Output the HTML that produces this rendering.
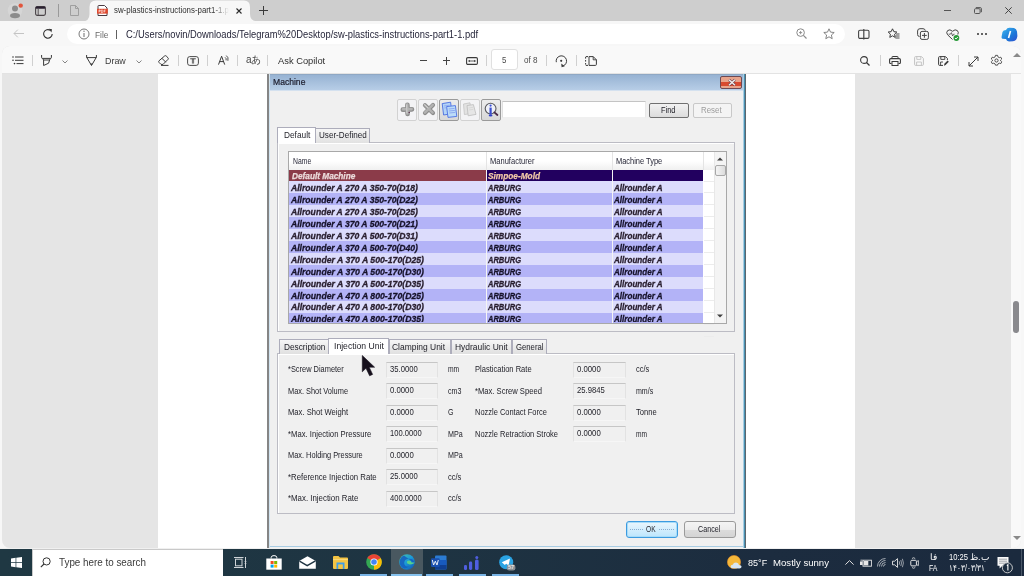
<!DOCTYPE html>
<html><head><meta charset="utf-8">
<style>
*{margin:0;padding:0;box-sizing:border-box}
html,body{width:1024px;height:576px;overflow:hidden;background:#f7f7f7;font-family:"Liberation Sans",sans-serif;position:relative}
.a{position:absolute}
svg{position:absolute;overflow:visible}
.t{position:absolute;white-space:nowrap;line-height:1}
</style></head><body>

<div class="a" style="left:0px;top:0px;width:1024px;height:21px;background:#cecece"></div>
<svg style="left:82px;top:0px" width="176" height="22" viewBox="0 0 176 22"><path d="M0 21.5 Q7.5 21.5 7.5 14 L7.5 7 Q7.5 0.5 14 0.5 L162 0.5 Q168 0.5 168 7 L168 14 Q168 21.5 176 21.5 Z" fill="#f7f7f7"></path></svg>
<svg style="left:7px;top:3px" width="16" height="16" viewBox="0 0 16 16"><circle cx="8" cy="7.5" r="7.3" fill="#d6d6d6"></circle><circle cx="8" cy="5.6" r="3" fill="#8c8c8c"></circle><ellipse cx="8" cy="12.6" rx="5" ry="2.6" fill="#8c8c8c"></ellipse><circle cx="13.7" cy="2.6" r="2.2" fill="#e2553c"></circle></svg>
<svg style="left:35px;top:6px" width="11" height="10" viewBox="0 0 11 10"><rect x="0.6" y="0.6" width="9.8" height="8.8" rx="1.6" fill="none" stroke="#4a4448" stroke-width="1.1"></rect><rect x="0.6" y="0.6" width="9.8" height="2.2" rx="1" fill="#2a2030"></rect><path d="M3.2 2.5V9" stroke="#5a5458" stroke-width="1"></path></svg>
<div class="a" style="left:58px;top:4px;width:1px;height:13px;background:#9a9a9a"></div>
<svg style="left:70px;top:5px" width="9" height="11" viewBox="0 0 9 11"><path d="M0.5 0.5H5.5L8.5 3.5V10.5H0.5Z M5.5 0.5V3.5H8.5" fill="none" stroke="#9a9a9a" stroke-width="0.9"></path></svg>
<svg style="left:97px;top:5px" width="11" height="11" viewBox="0 0 11 11"><path d="M1 10.5V1.2Q1 0.5 1.7 0.5H7.5L10 3V10.5Z" fill="#fff" stroke="#4a3a40" stroke-width="1"></path><rect x="0" y="3.8" width="10.8" height="4.8" fill="#e0472c"></rect><path d="M2 5V7.5M2 5H3.2V6.2H2M4.3 5V7.5H5.3Q5.9 7.5 5.9 6.8V5.8Q5.9 5 5.3 5Z M7.2 5V7.5M7.2 5H8.6M7.2 6.2H8.4" stroke="#fff" stroke-width="0.6" fill="none"></path></svg>
<div class="t" style="left: 114px; top: 5.2px; font-size: 9.5px; color: rgb(48, 48, 48); mask-image: linear-gradient(90deg, rgb(0, 0, 0) 85%, transparent 100%); transform-origin: 0px 0px; transform: scaleX(0.828176);">sw-plastics-instructions-part1-1.p</div>
<svg style="left:236px;top:8px" width="6" height="6" viewBox="0 0 6 6"><path d="M0.5 0.5L5.5 5.5M5.5 0.5L0.5 5.5" stroke="#2a2a2a" stroke-width="1.1"></path></svg>
<svg style="left:259px;top:6px" width="9" height="9" viewBox="0 0 9 9"><path d="M4.5 0V9M0 4.5H9" stroke="#3a3a3a" stroke-width="1"></path></svg>
<div class="a" style="left:944px;top:10px;width:7px;height:1px;background:#555"></div>
<svg style="left:974px;top:7px" width="8" height="7" viewBox="0 0 8 7"><rect x="0.5" y="1.7" width="5.6" height="4.8" rx="1" fill="none" stroke="#555" stroke-width="1"></rect><path d="M1.8 0.6H6.2Q7.4 0.6 7.4 1.8V5.2" fill="none" stroke="#555" stroke-width="1"></path></svg>
<svg style="left:1005px;top:7px" width="7" height="7" viewBox="0 0 7 7"><path d="M0.3 0.3L6.7 6.7M6.7 0.3L0.3 6.7" stroke="#444" stroke-width="1"></path></svg>
<div class="a" style="left:0px;top:21px;width:1024px;height:26px;background:#f7f7f7"></div>
<div class="a" style="left:67px;top:24px;width:778px;height:20px;background:#ffffff;border-radius:10px"></div>
<svg style="left:13px;top:29px" width="12" height="9" viewBox="0 0 12 9"><path d="M11 4.5H1M4.8 0.7L1 4.5L4.8 8.3" fill="none" stroke="#c4c4c4" stroke-width="1"></path></svg>
<svg style="left:42px;top:28px" width="12" height="12" viewBox="0 0 12 12"><path d="M10.2 6A4.3 4.3 0 1 1 8.4 2.4" fill="none" stroke="#333" stroke-width="1.1"></path><path d="M6.8 0.8L10 1.3L9.4 4.4Z" fill="#333"></path></svg>
<svg style="left:78px;top:28px" width="12" height="12" viewBox="0 0 12 12"><circle cx="6" cy="6" r="5" fill="none" stroke="#7a7a7a" stroke-width="1"></circle><path d="M6 5V9" stroke="#7a7a7a" stroke-width="1.1"></path><circle cx="6" cy="3.3" r="0.7" fill="#7a7a7a"></circle></svg>
<div class="t" style="left: 95px; top: 29.87px; font-size: 9.6px; color: rgb(106, 106, 106); font-weight: normal; font-style: normal; transform-origin: 0px 0px; transform: scaleX(0.872727);">File</div>
<div class="a" style="left:115.5px;top:29.5px;width:1.2px;height:9.5px;background:#606060"></div>
<div class="t" style="left: 125.7px; top: 29.7px; font-size: 10.4px; color: rgb(38, 38, 58); font-weight: normal; font-style: normal; transform-origin: 0px 0px; transform: scaleX(0.901661);">C:/Users/novin/Downloads/Telegram%20Desktop/sw-plastics-instructions-part1-1.pdf</div>
<svg style="left:796px;top:28px" width="11" height="11" viewBox="0 0 11 11"><circle cx="4.6" cy="4.6" r="3.8" fill="none" stroke="#8a8a8a" stroke-width="1"></circle><path d="M7.4 7.4L10.5 10.5" stroke="#8a8a8a" stroke-width="1.1"></path><path d="M4.6 3V6.2M3 4.6H6.2" stroke="#8a8a8a" stroke-width="0.9"></path></svg>
<svg style="left:822.5px;top:27.5px" width="12" height="12" viewBox="0 0 12 12"><path d="M6 0.8L7.5 4.1L11.2 4.5L8.4 7L9.2 10.7L6 8.8L2.8 10.7L3.6 7L0.8 4.5L4.5 4.1Z" fill="none" stroke="#777" stroke-width="0.9" stroke-linejoin="round"></path></svg>
<svg style="left:858px;top:29px" width="12" height="11" viewBox="0 0 12 11"><rect x="0.6" y="1.2" width="10.4" height="8.2" rx="1.4" fill="none" stroke="#444" stroke-width="1.1"></rect><path d="M5.8 0V10.6" stroke="#444" stroke-width="1.2"></path></svg>
<svg style="left:887px;top:28px" width="13" height="12" viewBox="0 0 13 12"><path d="M5.5 0.8L6.9 3.7L9.8 4L7.6 6.2L8.2 9.4L5.5 7.8L2.8 9.4L3.4 6.2L1.2 4L4.1 3.7Z" fill="none" stroke="#3a3a3a" stroke-width="1" stroke-linejoin="round"></path><path d="M9 6H12.5M8.6 8H12.5M8.4 10H12.5" stroke="#3a3a3a" stroke-width="0.9"></path></svg>
<svg style="left:917px;top:28px" width="12" height="12" viewBox="0 0 12 12"><path d="M2.5 8.5Q0.6 8.5 0.6 6.5V3Q0.6 0.7 3 0.7H6Q8 0.7 8.3 2.6" fill="none" stroke="#444" stroke-width="1"></path><rect x="3.4" y="3.4" width="8" height="8" rx="1.6" fill="#f7f7f7" stroke="#444" stroke-width="1"></rect><path d="M7.4 5V9.8M5 7.4H9.8" stroke="#444" stroke-width="1"></path></svg>
<svg style="left:946px;top:28.5px" width="14" height="12" viewBox="0 0 14 12"><path d="M6.5 10.5L1.6 5.8Q-0.2 3.6 1.6 1.6Q3.8 -0.3 6.5 2.3Q9.2 -0.3 11.4 1.6Q13 3.3 11.8 5.5" fill="none" stroke="#444" stroke-width="1"></path><path d="M2.6 5.2H4.4L5.4 3.6L6.6 7L7.6 5.2H8.6" fill="none" stroke="#444" stroke-width="0.8"></path><circle cx="10.4" cy="9" r="2.9" fill="#2a9a3a"></circle><path d="M9 9L10 10L11.8 8" fill="none" stroke="#fff" stroke-width="0.9"></path></svg>
<div class="a" style="left:977px;top:33px;width:1.6px;height:1.6px;background:#333;border-radius:1px"></div>
<div class="a" style="left:981px;top:33px;width:1.6px;height:1.6px;background:#333;border-radius:1px"></div>
<div class="a" style="left:985px;top:33px;width:1.6px;height:1.6px;background:#333;border-radius:1px"></div>
<svg style="left:1001px;top:27px" width="17" height="15" viewBox="0 0 17 15"><defs><linearGradient id="cp" x1="0" y1="0" x2="1" y2="1"><stop offset="0" stop-color="#3fb8f0"></stop><stop offset="0.6" stop-color="#1c78d8"></stop><stop offset="1" stop-color="#3050d0"></stop></linearGradient></defs><path d="M5 3Q6 0.5 9 0.8L13 1Q15.5 1.5 16 4.5L16.4 9Q16 13.8 12 14.2L8 14.4Q5.5 14.4 5 12L1.4 11.8Q0.2 11.4 0.6 9.6L1.5 5Q2.2 3 5 3Z" fill="url(#cp)"></path><path d="M9.5 4L7.5 11" stroke="#fff" stroke-width="1.6"></path></svg>
<div class="a" style="left:2px;top:46px;width:1019px;height:502px;background:#e5e5e5;border-radius:8px;overflow:hidden">
<div class="a" style="left:0px;top:0px;width:1019px;height:28px;background:#f9f9f9;border-bottom:1px solid #e3e3e3"></div>
<div class="a" style="left:1009px;top:28px;width:10px;height:474px;background:#f9f9f9"></div>
</div>
<div class="a" style="left:158px;top:74px;width:697px;height:474px;background:#ffffff"></div>
<div class="a" style="left:1013px;top:301px;width:6px;height:32px;background:#8a8a8e;border-radius:3px"></div>
<svg style="left:1012.5px;top:53px" width="8" height="4" viewBox="0 0 8 4"><path d="M0 4L4 0L8 4Z" fill="#8a8a8a"></path></svg>
<svg style="left:1012.5px;top:536px" width="8" height="4" viewBox="0 0 8 4"><path d="M0 0L4 4L8 0Z" fill="#8a8a8a"></path></svg>
<svg style="left:12px;top:56px" width="12" height="9" viewBox="0 0 12 9"><path d="M3 1H11.5M3 4.3H11.5M4.5 7.6H11.5" stroke="#3a3a3a" stroke-width="1"></path><circle cx="1" cy="1" r="0.8" fill="#3a3a3a"></circle><circle cx="1" cy="4.3" r="0.8" fill="#3a3a3a"></circle><circle cx="2.5" cy="7.6" r="0.8" fill="#3a3a3a"></circle></svg>
<div class="a" style="left:32px;top:55px;width:1px;height:11px;background:#d0d0d0"></div>
<svg style="left:40.5px;top:55px" width="11" height="11" viewBox="0 0 11 11"><path d="M0.6 0V2.5Q0.6 3.4 1.5 3.4H9.5Q10.4 3.4 10.4 2.5V0" fill="none" stroke="#3a3a3a" stroke-width="1"></path><path d="M1.5 3.4L2.6 5H8.6L9.5 3.4" fill="none" stroke="#3a3a3a" stroke-width="1"></path><path d="M2.6 5L2.6 10.5L7.6 8.2L8.6 5" fill="none" stroke="#3a3a3a" stroke-width="1"></path></svg>
<svg style="left:61.5px;top:59.5px" width="6" height="4" viewBox="0 0 6 4"><path d="M0.5 0.5L3 3L5.5 0.5" fill="none" stroke="#777" stroke-width="0.9"></path></svg>
<svg style="left:85.5px;top:55px" width="11" height="11" viewBox="0 0 11 11"><path d="M0.6 0V2.2L5.5 10.5L10.4 2.2V0" fill="none" stroke="#3a3a3a" stroke-width="1"></path><path d="M0.6 2.6H10.4" stroke="#3a3a3a" stroke-width="1"></path><path d="M4.3 8.6L5.5 10.6L6.7 8.6Z" fill="#3a3a3a"></path></svg>
<div class="t" style="left: 104.9px; top: 55.9px; font-size: 9.8px; color: rgb(58, 58, 58); font-weight: normal; font-style: normal; transform-origin: 0px 0px; transform: scaleX(0.90929);">Draw</div>
<svg style="left:136px;top:59.5px" width="6" height="4" viewBox="0 0 6 4"><path d="M0.5 0.5L3 3L5.5 0.5" fill="none" stroke="#777" stroke-width="0.9"></path></svg>
<svg style="left:157.5px;top:55px" width="11" height="11" viewBox="0 0 11 11"><path d="M6.6 1Q7.4 0.3 8.2 1L10 2.8Q10.7 3.6 10 4.4L5 9.4H3L1 7.4Q0.3 6.6 1 5.8Z" fill="none" stroke="#3a3a3a" stroke-width="1"></path><path d="M3.8 3.2L7.8 7.2M3 10.4H10.5" stroke="#3a3a3a" stroke-width="1"></path></svg>
<div class="a" style="left:178px;top:55px;width:1px;height:11px;background:#d0d0d0"></div>
<svg style="left:187px;top:55.5px" width="12" height="10" viewBox="0 0 12 10"><rect x="0.6" y="0.6" width="10.8" height="8.8" rx="2.2" fill="none" stroke="#4a4a4a" stroke-width="1"></rect><path d="M3.2 2.8H8.8" stroke="#4a4a4a" stroke-width="1"></path><path d="M5.4 2.8V7.6M6.6 2.8V7.6" stroke="#4a4a4a" stroke-width="0.8"></path></svg>
<div class="a" style="left:207px;top:55px;width:1px;height:11px;background:#d0d0d0"></div>
<svg style="left:217.5px;top:55px" width="12" height="10" viewBox="0 0 12 10"><path d="M0.5 9.6L3.6 1.2L6.7 9.6M1.7 6.6H5.5" fill="none" stroke="#3a3a3a" stroke-width="1"></path><path d="M7.4 2.6Q8.6 3.4 8.2 5M8.6 0.8Q10.8 2.2 10 5.4" fill="none" stroke="#3a3a3a" stroke-width="0.9" stroke-linecap="round"></path></svg>
<div class="a" style="left:237px;top:55px;width:1px;height:11px;background:#d0d0d0"></div>
<div class="t" style="left:245.5px;top:54.5px;font-size:10px;color:#444;letter-spacing:-1px;transform:scale(1.001)">aあ</div>
<div class="a" style="left:267px;top:55px;width:1px;height:11px;background:#d0d0d0"></div>
<div class="t" style="left: 278.4px; top: 55.96px; font-size: 9.5px; color: rgb(46, 46, 46); font-weight: normal; font-style: normal; transform-origin: 0px 0px; transform: scaleX(0.982055);">Ask Copilot</div>
<div class="a" style="left:419.5px;top:60px;width:7px;height:1px;background:#444"></div>
<div class="a" style="left:443px;top:60px;width:7px;height:1px;background:#444"></div>
<div class="a" style="left:446px;top:56.5px;width:1px;height:8px;background:#444"></div>
<svg style="left:465.5px;top:57px" width="12" height="8" viewBox="0 0 12 8"><rect x="0.6" y="0.6" width="10.8" height="6.8" rx="1.2" fill="none" stroke="#3a3a3a" stroke-width="1.1"></rect><path d="M2.5 4H9.5" stroke="#3a3a3a" stroke-width="0.8"></path><path d="M2.2 4L3.8 2.7V5.3Z M9.8 4L8.2 2.7V5.3Z" fill="#3a3a3a"></path></svg>
<div class="a" style="left:486px;top:55px;width:1px;height:11px;background:#d0d0d0"></div>
<div class="a" style="left:490.5px;top:49.3px;width:27px;height:21.2px;background:#ffffff;border:1px solid #e0e0e0;border-radius:3px"></div>
<div class="t" style="left: 501.8px; top: 56.15px; font-size: 8.8px; color: rgb(74, 74, 74); font-weight: normal; font-style: normal; transform-origin: 0px 0px; transform: scaleX(0.896815);">5</div>
<div class="t" style="left: 524px; top: 56.15px; font-size: 8.8px; color: rgb(74, 74, 74); font-weight: normal; font-style: normal; transform-origin: 0px 0px; transform: scaleX(0.919149);">of 8</div>
<div class="a" style="left:545.5px;top:55px;width:1px;height:11px;background:#d0d0d0"></div>
<svg style="left:554.5px;top:54.5px" width="13" height="13" viewBox="0 0 13 13"><path d="M1.3 7.2A5.2 5.2 0 1 1 8.2 10.9" fill="none" stroke="#3a3a3a" stroke-width="1"></path><path d="M6.2 8.6L6.6 12.2L9.8 11.2Z" fill="#3a3a3a"></path><circle cx="6.2" cy="5.8" r="1.1" fill="#3a3a3a"></circle></svg>
<div class="a" style="left:575.5px;top:55px;width:1px;height:11px;background:#d0d0d0"></div>
<svg style="left:584.5px;top:55.5px" width="12" height="10" viewBox="0 0 12 10"><path d="M4 0.6H8.2L11.4 3.8V8.4Q11.4 9.4 10.4 9.4H4" fill="none" stroke="#3a3a3a" stroke-width="1"></path><path d="M4 0.6V9.4" stroke="#3a3a3a" stroke-width="1"></path><path d="M8.2 0.6V3.8H11.4" fill="none" stroke="#3a3a3a" stroke-width="0.9"></path><path d="M0.6 1V9" stroke="#3a3a3a" stroke-width="1" stroke-dasharray="1.6 1.4"></path><path d="M0.8 0.6H3M0.8 9.4H3" stroke="#3a3a3a" stroke-width="1"></path></svg>
<svg style="left:860px;top:56px" width="10" height="10" viewBox="0 0 10 10"><circle cx="4" cy="4" r="3.4" fill="none" stroke="#3a3a3a" stroke-width="1.1"></circle><path d="M6.5 6.5L9.5 9.5" stroke="#3a3a3a" stroke-width="1.2"></path></svg>
<div class="a" style="left:879.5px;top:55px;width:1px;height:11px;background:#d0d0d0"></div>
<svg style="left:889px;top:56px" width="12" height="10" viewBox="0 0 12 10"><path d="M3 2.5V1Q3 0.5 3.5 0.5H8.5Q9 0.5 9 1V2.5" fill="none" stroke="#3a3a3a" stroke-width="1"></path><path d="M2.5 7.5H1.5Q0.6 7.5 0.6 6.5V3.8Q0.6 2.6 1.8 2.6H10.2Q11.4 2.6 11.4 3.8V6.5Q11.4 7.5 10.5 7.5H9.5" fill="none" stroke="#3a3a3a" stroke-width="1.1"></path><rect x="3" y="5.5" width="6" height="4" fill="none" stroke="#3a3a3a" stroke-width="1"></rect></svg>
<svg style="left:913.5px;top:56px" width="10" height="10" viewBox="0 0 10 10"><path d="M1.6 0.6H7.5L9.4 2.5V8.4Q9.4 9.4 8.4 9.4H1.6Q0.6 9.4 0.6 8.4V1.6Q0.6 0.6 1.6 0.6Z" fill="none" stroke="#c2c2c2" stroke-width="1"></path><path d="M2.8 0.8V3.4H6.8V0.8M2.6 9.2V6H7.4V9.2" fill="none" stroke="#c2c2c2" stroke-width="0.9"></path></svg>
<svg style="left:938px;top:56px" width="11" height="10" viewBox="0 0 11 10"><path d="M5 9.4H1.6Q0.6 9.4 0.6 8.4V1.6Q0.6 0.6 1.6 0.6H7.5L9.4 2.5V4" fill="none" stroke="#3a3a3a" stroke-width="1"></path><path d="M2.8 0.8V3.4H6.8V0.8M2.6 9.2V6H5" fill="none" stroke="#3a3a3a" stroke-width="0.9"></path><path d="M6 9.8L6.4 7.8L9.6 4.6L10.8 5.8L7.6 9Z" fill="#3a3a3a"></path></svg>
<div class="a" style="left:957.5px;top:55px;width:1px;height:11px;background:#d0d0d0"></div>
<svg style="left:967.5px;top:55.5px" width="11" height="11" viewBox="0 0 11 11"><path d="M1 10L10 1M6 1H10V5M1 6V10H5" fill="none" stroke="#3a3a3a" stroke-width="1"></path></svg>
<svg style="left:991px;top:55px" width="11" height="11" viewBox="0 0 11 11"><path d="M4.4 0.6H6.6L7 2.2L8.4 3L10 2.5L11 4.4L9.8 5.5V6.3L11 7.4L10 9.3L8.4 8.8L7 9.6L6.6 10.9H4.4L4 9.6L2.6 8.8L1 9.3L0 7.4L1.2 6.3V5.5L0 4.4L1 2.5L2.6 3L4 2.2Z" transform="translate(0.3,-0.2) scale(0.95)" fill="none" stroke="#3a3a3a" stroke-width="0.9" stroke-linejoin="round"></path><circle cx="5.5" cy="5.5" r="1.6" fill="none" stroke="#3a3a3a" stroke-width="0.9"></circle></svg>
<div class="a" style="left:267px;top:74px;width:479px;height:474px;background:#f0f0f0;border-left:2px solid #858585;border-right:1px solid #5c666e;box-shadow:inset 1px 0 0 #d2e4f0, inset -1px 0 0 #4890b0, inset -2px 0 0 #a6cce2"></div>
<div class="a" style="left:270px;top:74px;width:473px;height:1px;background:#8fa8c4"></div>
<div class="a" style="left:270px;top:75px;width:473px;height:16px;background:linear-gradient(#97b3d3,#b9cfe8)"></div>
<div class="a" style="left:270px;top:90px;width:473px;height:1px;background:#d4e1ef"></div>
<div class="a" style="left:270px;top:546px;width:473px;height:1px;background:#a9cde4"></div>
<div class="a" style="left:270px;top:547px;width:473px;height:1px;background:#f0f0f0"></div>
<div class="t" style="left: 272.5px; top: 78.41px; font-size: 9.2px; color: rgb(26, 26, 42); font-weight: normal; font-style: normal; transform-origin: 0px 0px; -webkit-text-stroke: 0.2px rgb(26, 26, 42); transform: scaleX(0.932794);">Machine</div>
<div class="a" style="left:720px;top:76px;width:22px;height:12.5px;background:linear-gradient(#e8a48c 0%,#e8a48c 42%,#d84a30 45%,#d84a30 78%,#e8a48c 80%);border:1px solid #6e4a52;border-radius:2px"></div>
<svg style="left:727.5px;top:79px" width="8" height="7" viewBox="0 0 8 7"><path d="M1 0.8L7 6.2M7 0.8L1 6.2" stroke="#6a4048" stroke-width="2.6"></path><path d="M1 0.8L7 6.2M7 0.8L1 6.2" stroke="#f2eeee" stroke-width="1.5"></path></svg>
<div class="a" style="left:397px;top:99px;width:20px;height:22px;background:#f3f3f5;border:1px solid #d2d2d2;border-radius:2px"></div>
<div class="a" style="left:418px;top:99px;width:20px;height:22px;background:#f3f3f5;border:1px solid #d2d2d2;border-radius:2px"></div>
<div class="a" style="left:439px;top:99px;width:20px;height:22px;background:linear-gradient(#ececec,#d8d8d8);border:1px solid #9a9a9a;border-radius:2px"></div>
<div class="a" style="left:460px;top:99px;width:20px;height:22px;background:#f3f3f5;border:1px solid #d2d2d2;border-radius:2px"></div>
<div class="a" style="left:481px;top:99px;width:20px;height:22px;background:linear-gradient(#ececec,#d8d8d8);border:1px solid #9a9a9a;border-radius:2px"></div>
<svg style="left:400px;top:101.5px" width="15" height="15" viewBox="0 0 15 15"><path d="M7.4 2.8L7.6 12M2.8 7.6L12 7.4" stroke="#8e8e8e" stroke-width="4.6" stroke-linecap="round"></path><path d="M7.2 2.6L7.3 11.4M3 7.2L11.6 7.1" stroke="#b4b4b4" stroke-width="2.6" stroke-linecap="round"></path><path d="M6.6 3L6.8 10.6" stroke="#d0d0d0" stroke-width="0.9" stroke-linecap="round"></path><circle cx="9.2" cy="10.4" r="0.7" fill="#5a2a4a"></circle></svg>
<svg style="left:421.5px;top:102px" width="14" height="14" viewBox="0 0 14 14"><path d="M3 3.2L11 11M11 3L3 11" stroke="#8c8c8c" stroke-width="4.2" stroke-linecap="round"></path><path d="M2.8 3L10.6 10.6M10.8 2.8L2.9 10.6" stroke="#b2b2b2" stroke-width="2.4" stroke-linecap="round"></path><path d="M2.6 2.6L6 6" stroke="#d4d4d4" stroke-width="0.9" stroke-linecap="round"></path></svg>
<svg style="left:440.5px;top:100.5px" width="17" height="17" viewBox="0 0 17 17"><path d="M1.2 2.6L9.6 1.2L11 12.6L2.6 14Z" fill="#b4d4f6" stroke="#4a6ee0" stroke-width="0.9"></path><path d="M5.6 5.6L14.4 4.6L15.8 15.4L7 16.4Z" fill="#bcdcf8" stroke="#4c70e4" stroke-width="0.9"></path><path d="M7.6 8L13.6 7.4M7.9 10L13.9 9.4M8.2 12L14.2 11.4" stroke="#7a94ec" stroke-width="0.7"></path><path d="M3 5L8.6 4.2M3.3 7L6 6.6" stroke="#7a94ec" stroke-width="0.6"></path></svg>
<svg style="left:462px;top:101px" width="15" height="16" viewBox="0 0 15 16"><path d="M1.5 3L8 1.8L9 12.4L2.4 13.6Z" fill="#e2e2e2" stroke="#c4c4c4" stroke-width="0.8"></path><path d="M5 4.6L11.4 3.6L14 13.4L6.2 14.8Z" fill="#e6e6e6" stroke="#bcbcbc" stroke-width="0.8"></path><path d="M6.6 7L11 6.3M6.9 9L11.4 8.3" stroke="#cfcfcf" stroke-width="0.6"></path></svg>
<svg style="left:483.5px;top:101.5px" width="15" height="16" viewBox="0 0 15 16"><circle cx="6.6" cy="6.6" r="5.4" fill="#eef0f8" stroke="#5a5a5e" stroke-width="1.1"></circle><path d="M10.4 10.4L13.4 13" stroke="#4a2a4a" stroke-width="1.8" stroke-linecap="round"></path><circle cx="6.6" cy="3.6" r="1.1" fill="#3a50d8"></circle><path d="M6.6 5.6V12.6" stroke="#3a4ed0" stroke-width="2.2"></path><ellipse cx="6.6" cy="13.6" rx="1.9" ry="1" fill="#3040c8"></ellipse></svg>
<div class="a" style="left:502px;top:101px;width:144px;height:17px;background:#ffffff;border-top:1px solid #c4c4c4;border-left:1px solid #e0e0e0;border-right:1px solid #e8e8e8;border-bottom:1px solid #f0f0f0"></div>
<div class="a" style="left:649px;top:103px;width:40px;height:15px;background:linear-gradient(#f2f2f2,#dcdcdc);border:1px solid #707070;border-radius:2px"></div>
<div class="t" style="left: 660.6px; top: 105.98px; font-size: 9px; color: rgb(26, 26, 34); font-weight: normal; font-style: normal; transform-origin: 0px 0px; transform: scaleX(0.822123);">Find</div>
<div class="a" style="left:693px;top:103px;width:39px;height:15px;background:#f4f4f4;border:1px solid #c8c8c8;border-radius:2px"></div>
<div class="t" style="left: 701.2px; top: 105.98px; font-size: 9px; color: rgb(156, 156, 156); font-weight: normal; font-style: normal; transform-origin: 0px 0px; transform: scaleX(0.876013);">Reset</div>
<div class="a" style="left:277px;top:142px;width:458px;height:190px;border:1px solid #bcbcc4;background:#f0f0f0;box-shadow:inset 1px 1px 0 #ffffff"></div>
<div class="a" style="left:315px;top:128px;width:55px;height:15px;background:linear-gradient(#f6f6f6,#e2e2e2);border:1px solid #adadbb;border-bottom:none"></div>
<div class="a" style="left:277px;top:127px;width:39px;height:16px;background:#ffffff;border:1px solid #adadbb;border-bottom:none"></div>
<div class="t" style="left: 283.5px; top: 130.63px; font-size: 9.3px; color: rgb(30, 30, 38); font-weight: normal; font-style: normal; transform-origin: 0px 0px; transform: scaleX(0.892471);">Default</div>
<div class="t" style="left: 318.6px; top: 131.43px; font-size: 9.3px; color: rgb(30, 30, 38); font-weight: normal; font-style: normal; transform-origin: 0px 0px; transform: scaleX(0.870736);">User-Defined</div>
<div class="a" style="left:288px;top:151px;width:439px;height:173px;background:#ffffff;border:1px solid #a8a8a8"></div>
<div class="a" style="left:289px;top:152px;width:437px;height:18px;background:linear-gradient(#ffffff 0%,#ffffff 50%,#f0f0f0 100%)"></div>
<div class="a" style="left:486px;top:152px;width:1px;height:18px;background:#e4e4e4"></div>
<div class="a" style="left:612px;top:152px;width:1px;height:18px;background:#e4e4e4"></div>
<div class="a" style="left:703px;top:152px;width:1px;height:18px;background:#e4e4e4"></div>
<div class="t" style="left: 293.4px; top: 157.38px; font-size: 9px; color: rgb(38, 38, 54); font-weight: normal; font-style: normal; transform-origin: 0px 0px; transform: scaleX(0.75784);">Name</div>
<div class="t" style="left: 489.9px; top: 157.38px; font-size: 9px; color: rgb(38, 38, 54); font-weight: normal; font-style: normal; transform-origin: 0px 0px; transform: scaleX(0.837242);">Manufacturer</div>
<div class="t" style="left: 616px; top: 157.38px; font-size: 9px; color: rgb(38, 38, 54); font-weight: normal; font-style: normal; transform-origin: 0px 0px; transform: scaleX(0.826846);">Machine Type</div>
<div class="a" style="left:714px;top:152px;width:12px;height:171px;background:#f4f4f4;border-left:1px solid #e8e8e8"></div>
<svg style="left:717px;top:157px" width="6" height="4" viewBox="0 0 6 4"><path d="M0 3.5L3 0.5L6 3.5z" fill="#404040"></path></svg>
<svg style="left:717px;top:314px" width="6" height="4" viewBox="0 0 6 4"><path d="M0 0.5L3 3.5L6 0.5z" fill="#404040"></path></svg>
<div class="a" style="left:715px;top:165px;width:11px;height:11px;background:linear-gradient(90deg,#f4f4f4,#dcdcdc);border:1px solid #a8a8a8;border-radius:2px"></div>
<div class="a" style="left:289px;top:170px;width:425px;height:153px;overflow:hidden">
<div class="a" style="left:0;top:0;width:197px;height:11px;background:#8b3b49"></div>
<div class="a" style="left:198px;top:0;width:216px;height:11px;background:#22005f"></div>
<div class="a" style="left:0;top:11.30px;width:414px;height:11.94px;background:#dcdcfc"></div>
<div class="a" style="left:0;top:23.24px;width:414px;height:11.94px;background:#b3b3f7"></div>
<div class="a" style="left:0;top:35.18px;width:414px;height:11.94px;background:#dcdcfc"></div>
<div class="a" style="left:0;top:47.12px;width:414px;height:11.94px;background:#b3b3f7"></div>
<div class="a" style="left:0;top:59.06px;width:414px;height:11.94px;background:#dcdcfc"></div>
<div class="a" style="left:0;top:71.00px;width:414px;height:11.94px;background:#b3b3f7"></div>
<div class="a" style="left:0;top:82.94px;width:414px;height:11.94px;background:#dcdcfc"></div>
<div class="a" style="left:0;top:94.88px;width:414px;height:11.94px;background:#b3b3f7"></div>
<div class="a" style="left:0;top:106.82px;width:414px;height:11.94px;background:#dcdcfc"></div>
<div class="a" style="left:0;top:118.76px;width:414px;height:11.94px;background:#b3b3f7"></div>
<div class="a" style="left:0;top:130.70px;width:414px;height:11.94px;background:#dcdcfc"></div>
<div class="a" style="left:0;top:142.64px;width:414px;height:11.94px;background:#b3b3f7"></div>
</div>
<div class="a" style="left:704px;top:181px;width:10px;height:1px;background:#ececec"></div>
<div class="a" style="left:704px;top:192px;width:10px;height:1px;background:#ececec"></div>
<div class="a" style="left:704px;top:204px;width:10px;height:1px;background:#ececec"></div>
<div class="a" style="left:704px;top:216px;width:10px;height:1px;background:#ececec"></div>
<div class="a" style="left:704px;top:228px;width:10px;height:1px;background:#ececec"></div>
<div class="a" style="left:704px;top:240px;width:10px;height:1px;background:#ececec"></div>
<div class="a" style="left:704px;top:252px;width:10px;height:1px;background:#ececec"></div>
<div class="a" style="left:704px;top:264px;width:10px;height:1px;background:#ececec"></div>
<div class="a" style="left:704px;top:276px;width:10px;height:1px;background:#ececec"></div>
<div class="a" style="left:704px;top:288px;width:10px;height:1px;background:#ececec"></div>
<div class="a" style="left:704px;top:300px;width:10px;height:1px;background:#ececec"></div>
<div class="a" style="left:704px;top:312px;width:10px;height:1px;background:#ececec"></div>
<div class="a" style="left:704px;top:324px;width:10px;height:1px;background:#ececec"></div>
<div class="a" style="left:704px;top:336px;width:10px;height:1px;background:#ececec"></div>
<div class="a" style="left:486px;top:170px;width:1px;height:153px;background:#f4f4f4"></div>
<div class="a" style="left:612px;top:170px;width:1px;height:153px;background:#f4f4f4"></div>
<div class="a" style="left:0;top:0;width:1024px;height:322px;overflow:hidden">
<div class="t" style="left: 291.7px; top: 172.38px; font-size: 9px; color: rgb(236, 220, 220); font-weight: bold; font-style: italic; transform-origin: 0px 0px; -webkit-text-stroke: 0.25px rgb(236, 220, 220); transform: scaleX(0.917184);">Default Machine</div>
<div class="t" style="left: 487.9px; top: 172.38px; font-size: 9px; color: rgb(242, 201, 168); font-weight: bold; font-style: italic; transform-origin: 0px 0px; -webkit-text-stroke: 0.25px rgb(242, 201, 168); transform: scaleX(0.920354);">Simpoe-Mold</div>
<div class="t" style="left: 291px; top: 184.08px; font-size: 9px; color: rgb(42, 32, 48); font-weight: bold; font-style: italic; transform-origin: 0px 0px; -webkit-text-stroke: 0.3px rgb(42, 32, 48); transform: scaleX(0.956911);">Allrounder A 270 A 350-70(D18)</div>
<div class="t" style="left: 487.6px; top: 184.08px; font-size: 9px; color: rgb(42, 32, 48); font-weight: bold; font-style: italic; transform-origin: 0px 0px; -webkit-text-stroke: 0.3px rgb(42, 32, 48); transform: scaleX(0.835443);">ARBURG</div>
<div class="t" style="left: 614px; top: 184.08px; font-size: 9px; color: rgb(42, 32, 48); font-weight: bold; font-style: italic; transform-origin: 0px 0px; -webkit-text-stroke: 0.3px rgb(42, 32, 48); transform: scaleX(0.89899);">Allrounder A</div>
<div class="t" style="left: 291px; top: 196.02px; font-size: 9px; color: rgb(22, 18, 42); font-weight: bold; font-style: italic; transform-origin: 0px 0px; -webkit-text-stroke: 0.3px rgb(22, 18, 42); transform: scaleX(0.956911);">Allrounder A 270 A 350-70(D22)</div>
<div class="t" style="left: 487.6px; top: 196.02px; font-size: 9px; color: rgb(22, 18, 42); font-weight: bold; font-style: italic; transform-origin: 0px 0px; -webkit-text-stroke: 0.3px rgb(22, 18, 42); transform: scaleX(0.835443);">ARBURG</div>
<div class="t" style="left: 614px; top: 196.02px; font-size: 9px; color: rgb(22, 18, 42); font-weight: bold; font-style: italic; transform-origin: 0px 0px; -webkit-text-stroke: 0.3px rgb(22, 18, 42); transform: scaleX(0.89899);">Allrounder A</div>
<div class="t" style="left: 291px; top: 207.96px; font-size: 9px; color: rgb(42, 32, 48); font-weight: bold; font-style: italic; transform-origin: 0px 0px; -webkit-text-stroke: 0.3px rgb(42, 32, 48); transform: scaleX(0.956911);">Allrounder A 270 A 350-70(D25)</div>
<div class="t" style="left: 487.6px; top: 207.96px; font-size: 9px; color: rgb(42, 32, 48); font-weight: bold; font-style: italic; transform-origin: 0px 0px; -webkit-text-stroke: 0.3px rgb(42, 32, 48); transform: scaleX(0.835443);">ARBURG</div>
<div class="t" style="left: 614px; top: 207.96px; font-size: 9px; color: rgb(42, 32, 48); font-weight: bold; font-style: italic; transform-origin: 0px 0px; -webkit-text-stroke: 0.3px rgb(42, 32, 48); transform: scaleX(0.89899);">Allrounder A</div>
<div class="t" style="left: 291px; top: 219.9px; font-size: 9px; color: rgb(22, 18, 42); font-weight: bold; font-style: italic; transform-origin: 0px 0px; -webkit-text-stroke: 0.3px rgb(22, 18, 42); transform: scaleX(0.956911);">Allrounder A 370 A 500-70(D21)</div>
<div class="t" style="left: 487.6px; top: 219.9px; font-size: 9px; color: rgb(22, 18, 42); font-weight: bold; font-style: italic; transform-origin: 0px 0px; -webkit-text-stroke: 0.3px rgb(22, 18, 42); transform: scaleX(0.835443);">ARBURG</div>
<div class="t" style="left: 614px; top: 219.9px; font-size: 9px; color: rgb(22, 18, 42); font-weight: bold; font-style: italic; transform-origin: 0px 0px; -webkit-text-stroke: 0.3px rgb(22, 18, 42); transform: scaleX(0.89899);">Allrounder A</div>
<div class="t" style="left: 291px; top: 231.84px; font-size: 9px; color: rgb(42, 32, 48); font-weight: bold; font-style: italic; transform-origin: 0px 0px; -webkit-text-stroke: 0.3px rgb(42, 32, 48); transform: scaleX(0.956911);">Allrounder A 370 A 500-70(D31)</div>
<div class="t" style="left: 487.6px; top: 231.84px; font-size: 9px; color: rgb(42, 32, 48); font-weight: bold; font-style: italic; transform-origin: 0px 0px; -webkit-text-stroke: 0.3px rgb(42, 32, 48); transform: scaleX(0.835443);">ARBURG</div>
<div class="t" style="left: 614px; top: 231.84px; font-size: 9px; color: rgb(42, 32, 48); font-weight: bold; font-style: italic; transform-origin: 0px 0px; -webkit-text-stroke: 0.3px rgb(42, 32, 48); transform: scaleX(0.89899);">Allrounder A</div>
<div class="t" style="left: 291px; top: 243.78px; font-size: 9px; color: rgb(22, 18, 42); font-weight: bold; font-style: italic; transform-origin: 0px 0px; -webkit-text-stroke: 0.3px rgb(22, 18, 42); transform: scaleX(0.956911);">Allrounder A 370 A 500-70(D40)</div>
<div class="t" style="left: 487.6px; top: 243.78px; font-size: 9px; color: rgb(22, 18, 42); font-weight: bold; font-style: italic; transform-origin: 0px 0px; -webkit-text-stroke: 0.3px rgb(22, 18, 42); transform: scaleX(0.835443);">ARBURG</div>
<div class="t" style="left: 614px; top: 243.78px; font-size: 9px; color: rgb(22, 18, 42); font-weight: bold; font-style: italic; transform-origin: 0px 0px; -webkit-text-stroke: 0.3px rgb(22, 18, 42); transform: scaleX(0.89899);">Allrounder A</div>
<div class="t" style="left: 291px; top: 255.72px; font-size: 9px; color: rgb(42, 32, 48); font-weight: bold; font-style: italic; transform-origin: 0px 0px; -webkit-text-stroke: 0.3px rgb(42, 32, 48); transform: scaleX(0.965736);">Allrounder A 370 A 500-170(D25)</div>
<div class="t" style="left: 487.6px; top: 255.72px; font-size: 9px; color: rgb(42, 32, 48); font-weight: bold; font-style: italic; transform-origin: 0px 0px; -webkit-text-stroke: 0.3px rgb(42, 32, 48); transform: scaleX(0.835443);">ARBURG</div>
<div class="t" style="left: 614px; top: 255.72px; font-size: 9px; color: rgb(42, 32, 48); font-weight: bold; font-style: italic; transform-origin: 0px 0px; -webkit-text-stroke: 0.3px rgb(42, 32, 48); transform: scaleX(0.89899);">Allrounder A</div>
<div class="t" style="left: 291px; top: 267.66px; font-size: 9px; color: rgb(22, 18, 42); font-weight: bold; font-style: italic; transform-origin: 0px 0px; -webkit-text-stroke: 0.3px rgb(22, 18, 42); transform: scaleX(0.965736);">Allrounder A 370 A 500-170(D30)</div>
<div class="t" style="left: 487.6px; top: 267.66px; font-size: 9px; color: rgb(22, 18, 42); font-weight: bold; font-style: italic; transform-origin: 0px 0px; -webkit-text-stroke: 0.3px rgb(22, 18, 42); transform: scaleX(0.835443);">ARBURG</div>
<div class="t" style="left: 614px; top: 267.66px; font-size: 9px; color: rgb(22, 18, 42); font-weight: bold; font-style: italic; transform-origin: 0px 0px; -webkit-text-stroke: 0.3px rgb(22, 18, 42); transform: scaleX(0.89899);">Allrounder A</div>
<div class="t" style="left: 291px; top: 279.6px; font-size: 9px; color: rgb(42, 32, 48); font-weight: bold; font-style: italic; transform-origin: 0px 0px; -webkit-text-stroke: 0.3px rgb(42, 32, 48); transform: scaleX(0.965736);">Allrounder A 370 A 500-170(D35)</div>
<div class="t" style="left: 487.6px; top: 279.6px; font-size: 9px; color: rgb(42, 32, 48); font-weight: bold; font-style: italic; transform-origin: 0px 0px; -webkit-text-stroke: 0.3px rgb(42, 32, 48); transform: scaleX(0.835443);">ARBURG</div>
<div class="t" style="left: 614px; top: 279.6px; font-size: 9px; color: rgb(42, 32, 48); font-weight: bold; font-style: italic; transform-origin: 0px 0px; -webkit-text-stroke: 0.3px rgb(42, 32, 48); transform: scaleX(0.89899);">Allrounder A</div>
<div class="t" style="left: 291px; top: 291.54px; font-size: 9px; color: rgb(22, 18, 42); font-weight: bold; font-style: italic; transform-origin: 0px 0px; -webkit-text-stroke: 0.3px rgb(22, 18, 42); transform: scaleX(0.965736);">Allrounder A 470 A 800-170(D25)</div>
<div class="t" style="left: 487.6px; top: 291.54px; font-size: 9px; color: rgb(22, 18, 42); font-weight: bold; font-style: italic; transform-origin: 0px 0px; -webkit-text-stroke: 0.3px rgb(22, 18, 42); transform: scaleX(0.835443);">ARBURG</div>
<div class="t" style="left: 614px; top: 291.54px; font-size: 9px; color: rgb(22, 18, 42); font-weight: bold; font-style: italic; transform-origin: 0px 0px; -webkit-text-stroke: 0.3px rgb(22, 18, 42); transform: scaleX(0.89899);">Allrounder A</div>
<div class="t" style="left: 291px; top: 303.48px; font-size: 9px; color: rgb(42, 32, 48); font-weight: bold; font-style: italic; transform-origin: 0px 0px; -webkit-text-stroke: 0.3px rgb(42, 32, 48); transform: scaleX(0.965736);">Allrounder A 470 A 800-170(D30)</div>
<div class="t" style="left: 487.6px; top: 303.48px; font-size: 9px; color: rgb(42, 32, 48); font-weight: bold; font-style: italic; transform-origin: 0px 0px; -webkit-text-stroke: 0.3px rgb(42, 32, 48); transform: scaleX(0.835443);">ARBURG</div>
<div class="t" style="left: 614px; top: 303.48px; font-size: 9px; color: rgb(42, 32, 48); font-weight: bold; font-style: italic; transform-origin: 0px 0px; -webkit-text-stroke: 0.3px rgb(42, 32, 48); transform: scaleX(0.89899);">Allrounder A</div>
<div class="t" style="left: 291px; top: 315.42px; font-size: 9px; color: rgb(22, 18, 42); font-weight: bold; font-style: italic; transform-origin: 0px 0px; -webkit-text-stroke: 0.3px rgb(22, 18, 42); transform: scaleX(0.965736);">Allrounder A 470 A 800-170(D35)</div>
<div class="t" style="left: 487.6px; top: 315.42px; font-size: 9px; color: rgb(22, 18, 42); font-weight: bold; font-style: italic; transform-origin: 0px 0px; -webkit-text-stroke: 0.3px rgb(22, 18, 42); transform: scaleX(0.835443);">ARBURG</div>
<div class="t" style="left: 614px; top: 315.42px; font-size: 9px; color: rgb(22, 18, 42); font-weight: bold; font-style: italic; transform-origin: 0px 0px; -webkit-text-stroke: 0.3px rgb(22, 18, 42); transform: scaleX(0.89899);">Allrounder A</div>
</div>
<div class="a" style="left:277px;top:353px;width:458px;height:161px;border:1px solid #bcbcc4;background:#f0f0f0;box-shadow:inset 1px 1px 0 #ffffff"></div>
<div class="a" style="left:279px;top:339px;width:50px;height:15px;background:linear-gradient(#f6f6f6,#e0e0e0);border:1px solid #adadbb;border-bottom:none"></div>
<div class="t" style="left: 283.6px; top: 342.26px; font-size: 9.5px; color: rgb(30, 30, 38); font-weight: normal; font-style: normal; transform-origin: 0px 0px; transform: scaleX(0.871006);">Description</div>
<div class="a" style="left:389px;top:339px;width:62px;height:15px;background:linear-gradient(#f6f6f6,#e0e0e0);border:1px solid #adadbb;border-bottom:none"></div>
<div class="t" style="left: 392.3px; top: 342.26px; font-size: 9.5px; color: rgb(30, 30, 38); font-weight: normal; font-style: normal; transform-origin: 0px 0px; transform: scaleX(0.889866);">Clamping Unit</div>
<div class="a" style="left:451px;top:339px;width:61px;height:15px;background:linear-gradient(#f6f6f6,#e0e0e0);border:1px solid #adadbb;border-bottom:none"></div>
<div class="t" style="left: 454.7px; top: 342.26px; font-size: 9.5px; color: rgb(30, 30, 38); font-weight: normal; font-style: normal; transform-origin: 0px 0px; transform: scaleX(0.891096);">Hydraulic Unit</div>
<div class="a" style="left:512px;top:339px;width:35px;height:15px;background:linear-gradient(#f6f6f6,#e0e0e0);border:1px solid #adadbb;border-bottom:none"></div>
<div class="t" style="left: 516.3px; top: 342.26px; font-size: 9.5px; color: rgb(30, 30, 38); font-weight: normal; font-style: normal; transform-origin: 0px 0px; transform: scaleX(0.813309);">General</div>
<div class="a" style="left:328px;top:338px;width:61px;height:16px;background:#ffffff;border:1px solid #adadbb;border-bottom:none"></div>
<div class="t" style="left: 333.5px; top: 341.26px; font-size: 9.5px; color: rgb(30, 30, 38); font-weight: normal; font-style: normal; transform-origin: 0px 0px; transform: scaleX(0.908563);">Injection Unit</div>
<div class="t" style="left: 288px; top: 365.38px; font-size: 9px; color: rgb(30, 30, 38); font-weight: normal; font-style: normal; transform-origin: 0px 0px; transform: scaleX(0.824803);">*Screw Diameter</div>
<div class="a" style="left:386px;top:362px;width:52px;height:16px;background:#f0f0f0;border-top:1px solid #c6c6c6;border-left:1px solid #e2e2e2;border-right:1px solid #e2e2e2;border-bottom:1px solid #f6f6f6"></div>
<div class="t" style="left: 389.8px; top: 364.68px; font-size: 9px; color: rgb(30, 30, 38); font-weight: normal; font-style: normal; transform-origin: 0px 0px; transform: scaleX(0.85108);">35.0000</div>
<div class="t" style="left: 448.3px; top: 365.38px; font-size: 9px; color: rgb(30, 30, 38); font-weight: normal; font-style: normal; transform-origin: 0px 0px; transform: scaleX(0.746667);">mm</div>
<div class="t" style="left: 288px; top: 386.88px; font-size: 9px; color: rgb(30, 30, 38); font-weight: normal; font-style: normal; transform-origin: 0px 0px; transform: scaleX(0.82139);">Max. Shot Volume</div>
<div class="a" style="left:386px;top:383px;width:52px;height:16px;background:#f0f0f0;border-top:1px solid #c6c6c6;border-left:1px solid #e2e2e2;border-right:1px solid #e2e2e2;border-bottom:1px solid #f6f6f6"></div>
<div class="t" style="left: 389.8px; top: 386.18px; font-size: 9px; color: rgb(30, 30, 38); font-weight: normal; font-style: normal; transform-origin: 0px 0px; transform: scaleX(0.862397);">0.0000</div>
<div class="t" style="left: 448.3px; top: 386.88px; font-size: 9px; color: rgb(30, 30, 38); font-weight: normal; font-style: normal; transform-origin: 0px 0px; transform: scaleX(0.787511);">cm3</div>
<div class="t" style="left: 288px; top: 408.38px; font-size: 9px; color: rgb(30, 30, 38); font-weight: normal; font-style: normal; transform-origin: 0px 0px; transform: scaleX(0.846561);">Max. Shot Weight</div>
<div class="a" style="left:386px;top:405px;width:52px;height:16px;background:#f0f0f0;border-top:1px solid #c6c6c6;border-left:1px solid #e2e2e2;border-right:1px solid #e2e2e2;border-bottom:1px solid #f6f6f6"></div>
<div class="t" style="left: 389.8px; top: 407.68px; font-size: 9px; color: rgb(30, 30, 38); font-weight: normal; font-style: normal; transform-origin: 0px 0px; transform: scaleX(0.862397);">0.0000</div>
<div class="t" style="left: 448.3px; top: 408.38px; font-size: 9px; color: rgb(30, 30, 38); font-weight: normal; font-style: normal; transform-origin: 0px 0px; transform: scaleX(0.783964);">G</div>
<div class="t" style="left: 288px; top: 429.88px; font-size: 9px; color: rgb(30, 30, 38); font-weight: normal; font-style: normal; transform-origin: 0px 0px; transform: scaleX(0.853948);">*Max. Injection Pressure</div>
<div class="a" style="left:386px;top:426px;width:52px;height:16px;background:#f0f0f0;border-top:1px solid #c6c6c6;border-left:1px solid #e2e2e2;border-right:1px solid #e2e2e2;border-bottom:1px solid #f6f6f6"></div>
<div class="t" style="left: 389.8px; top: 429.18px; font-size: 9px; color: rgb(30, 30, 38); font-weight: normal; font-style: normal; transform-origin: 0px 0px; transform: scaleX(0.843137);">100.0000</div>
<div class="t" style="left: 448.3px; top: 429.88px; font-size: 9px; color: rgb(30, 30, 38); font-weight: normal; font-style: normal; transform-origin: 0px 0px; transform: scaleX(0.793924);">MPa</div>
<div class="t" style="left: 288px; top: 451.38px; font-size: 9px; color: rgb(30, 30, 38); font-weight: normal; font-style: normal; transform-origin: 0px 0px; transform: scaleX(0.820456);">Max. Holding Pressure</div>
<div class="a" style="left:386px;top:448px;width:52px;height:16px;background:#f0f0f0;border-top:1px solid #c6c6c6;border-left:1px solid #e2e2e2;border-right:1px solid #e2e2e2;border-bottom:1px solid #f6f6f6"></div>
<div class="t" style="left: 389.8px; top: 450.68px; font-size: 9px; color: rgb(30, 30, 38); font-weight: normal; font-style: normal; transform-origin: 0px 0px; transform: scaleX(0.862397);">0.0000</div>
<div class="t" style="left: 448.3px; top: 451.38px; font-size: 9px; color: rgb(30, 30, 38); font-weight: normal; font-style: normal; transform-origin: 0px 0px; transform: scaleX(0.793924);">MPa</div>
<div class="t" style="left: 288px; top: 472.88px; font-size: 9px; color: rgb(30, 30, 38); font-weight: normal; font-style: normal; transform-origin: 0px 0px; transform: scaleX(0.864839);">*Reference Injection Rate</div>
<div class="a" style="left:386px;top:469px;width:52px;height:16px;background:#f0f0f0;border-top:1px solid #c6c6c6;border-left:1px solid #e2e2e2;border-right:1px solid #e2e2e2;border-bottom:1px solid #f6f6f6"></div>
<div class="t" style="left: 389.8px; top: 472.18px; font-size: 9px; color: rgb(30, 30, 38); font-weight: normal; font-style: normal; transform-origin: 0px 0px; transform: scaleX(0.85108);">25.0000</div>
<div class="t" style="left: 448.3px; top: 472.88px; font-size: 9px; color: rgb(30, 30, 38); font-weight: normal; font-style: normal; transform-origin: 0px 0px; transform: scaleX(0.836683);">cc/s</div>
<div class="t" style="left: 288px; top: 494.38px; font-size: 9px; color: rgb(30, 30, 38); font-weight: normal; font-style: normal; transform-origin: 0px 0px; transform: scaleX(0.874025);">*Max. Injection Rate</div>
<div class="a" style="left:386px;top:491px;width:52px;height:16px;background:#f0f0f0;border-top:1px solid #c6c6c6;border-left:1px solid #e2e2e2;border-right:1px solid #e2e2e2;border-bottom:1px solid #f6f6f6"></div>
<div class="t" style="left: 389.8px; top: 493.68px; font-size: 9px; color: rgb(30, 30, 38); font-weight: normal; font-style: normal; transform-origin: 0px 0px; transform: scaleX(0.843137);">400.0000</div>
<div class="t" style="left: 448.3px; top: 494.38px; font-size: 9px; color: rgb(30, 30, 38); font-weight: normal; font-style: normal; transform-origin: 0px 0px; transform: scaleX(0.836683);">cc/s</div>
<div class="t" style="left: 475px; top: 365.38px; font-size: 9px; color: rgb(30, 30, 38); font-weight: normal; font-style: normal; transform-origin: 0px 0px; transform: scaleX(0.837937);">Plastication Rate</div>
<div class="a" style="left:573px;top:362px;width:53px;height:16px;background:#f0f0f0;border-top:1px solid #c6c6c6;border-left:1px solid #e2e2e2;border-right:1px solid #e2e2e2;border-bottom:1px solid #f6f6f6"></div>
<div class="t" style="left: 577px; top: 364.68px; font-size: 9px; color: rgb(30, 30, 38); font-weight: normal; font-style: normal; transform-origin: 0px 0px; transform: scaleX(0.862397);">0.0000</div>
<div class="t" style="left: 636px; top: 365.38px; font-size: 9px; color: rgb(30, 30, 38); font-weight: normal; font-style: normal; transform-origin: 0px 0px; transform: scaleX(0.830439);">cc/s</div>
<div class="t" style="left: 475px; top: 386.88px; font-size: 9px; color: rgb(30, 30, 38); font-weight: normal; font-style: normal; transform-origin: 0px 0px; transform: scaleX(0.846333);">*Max. Screw Speed</div>
<div class="a" style="left:573px;top:383px;width:53px;height:16px;background:#f0f0f0;border-top:1px solid #c6c6c6;border-left:1px solid #e2e2e2;border-right:1px solid #e2e2e2;border-bottom:1px solid #f6f6f6"></div>
<div class="t" style="left: 577px; top: 386.18px; font-size: 9px; color: rgb(30, 30, 38); font-weight: normal; font-style: normal; transform-origin: 0px 0px; transform: scaleX(0.85108);">25.9845</div>
<div class="t" style="left: 636px; top: 386.88px; font-size: 9px; color: rgb(30, 30, 38); font-weight: normal; font-style: normal; transform-origin: 0px 0px; transform: scaleX(0.781818);">mm/s</div>
<div class="t" style="left: 475px; top: 408.38px; font-size: 9px; color: rgb(30, 30, 38); font-weight: normal; font-style: normal; transform-origin: 0px 0px; transform: scaleX(0.829608);">Nozzle Contact Force</div>
<div class="a" style="left:573px;top:405px;width:53px;height:16px;background:#f0f0f0;border-top:1px solid #c6c6c6;border-left:1px solid #e2e2e2;border-right:1px solid #e2e2e2;border-bottom:1px solid #f6f6f6"></div>
<div class="t" style="left: 577px; top: 407.68px; font-size: 9px; color: rgb(30, 30, 38); font-weight: normal; font-style: normal; transform-origin: 0px 0px; transform: scaleX(0.862397);">0.0000</div>
<div class="t" style="left: 636px; top: 408.38px; font-size: 9px; color: rgb(30, 30, 38); font-weight: normal; font-style: normal; transform-origin: 0px 0px; transform: scaleX(0.843822);">Tonne</div>
<div class="t" style="left: 475px; top: 429.88px; font-size: 9px; color: rgb(30, 30, 38); font-weight: normal; font-style: normal; transform-origin: 0px 0px; transform: scaleX(0.833778);">Nozzle Retraction Stroke</div>
<div class="a" style="left:573px;top:426px;width:53px;height:16px;background:#f0f0f0;border-top:1px solid #c6c6c6;border-left:1px solid #e2e2e2;border-right:1px solid #e2e2e2;border-bottom:1px solid #f6f6f6"></div>
<div class="t" style="left: 577px; top: 429.18px; font-size: 9px; color: rgb(30, 30, 38); font-weight: normal; font-style: normal; transform-origin: 0px 0px; transform: scaleX(0.862397);">0.0000</div>
<div class="t" style="left: 636px; top: 429.88px; font-size: 9px; color: rgb(30, 30, 38); font-weight: normal; font-style: normal; transform-origin: 0px 0px; transform: scaleX(0.733333);">mm</div>
<div class="a" style="left:626px;top:521px;width:52px;height:17px;background:linear-gradient(#eaf6fd,#bde6fd);border:1px solid #3c9be0;border-radius:3px;box-shadow:inset 0 0 0 1px #a8dcf8"></div>
<div class="t" style="left: 646.2px; top: 524.78px; font-size: 9px; color: rgb(30, 30, 38); font-weight: normal; font-style: normal; transform-origin: 0px 0px; transform: scaleX(0.737575);">OK</div>
<div class="a" style="left:630px;top:528.5px;width:13px;height:1px;background:repeating-linear-gradient(90deg,#8aaed0 0 1px,transparent 1px 2px)"></div>
<div class="a" style="left:659px;top:528.5px;width:15px;height:1px;background:repeating-linear-gradient(90deg,#8aaed0 0 1px,transparent 1px 2px)"></div>
<div class="a" style="left:684px;top:521px;width:52px;height:17px;background:linear-gradient(#f4f4f4 0%,#ececec 50%,#dcdcdc 51%,#d4d4d4 100%);border:1px solid #9a9a9a;border-radius:3px"></div>
<div class="t" style="left: 698.2px; top: 524.78px; font-size: 9px; color: rgb(30, 30, 38); font-weight: normal; font-style: normal; transform-origin: 0px 0px; transform: scaleX(0.795984);">Cancel</div>
<svg style="left:362px;top:354.5px" width="14" height="22" viewBox="0 0 14 22"><path d="M0.3 0.5V16.8L4 13.2L7.6 20.8L10.6 19.4L7.2 12.2H12.6Z" fill="#16101c" stroke="#16101c" stroke-width="0.6" stroke-linejoin="round"></path></svg>
<div class="a" style="left:0px;top:548px;width:1024px;height:1px;background:#f0f0f0"></div>
<div class="a" style="left:0px;top:549px;width:1024px;height:27px;background:linear-gradient(90deg,#1f3843 0%,#1e3442 40%,#1c2c3f 75%,#1b2a3e 100%)"></div>
<svg style="left:10.5px;top:557px" width="11" height="11" viewBox="0 0 11 11"><path d="M0 1.4L4.6 0.8V5.1H0Z M5.3 0.7L11 0V5.1H5.3Z M0 5.8H4.6V10.2L0 9.6Z M5.3 5.8H11V11L5.3 10.3Z" fill="#ffffff"></path></svg>
<div class="a" style="left:32px;top:549px;width:191px;height:27px;background:#ffffff;border-top:1.5px solid #c9c9c9;border-left:1px solid #c9c9c9"></div>
<svg style="left:40px;top:556.5px" width="11" height="11" viewBox="0 0 11 11"><circle cx="6.6" cy="4.4" r="3.6" fill="none" stroke="#333" stroke-width="1"></circle><path d="M4 7L0.8 10.2" stroke="#333" stroke-width="1.1"></path></svg>
<div class="t" style="left: 58.9px; top: 558.03px; font-size: 10px; color: rgb(58, 58, 58); font-weight: normal; font-style: normal; transform-origin: 0px 0px; transform: scaleX(0.984267);">Type here to search</div>
<svg style="left:233.5px;top:557px" width="13" height="11" viewBox="0 0 13 11"><rect x="1.5" y="2.2" width="6.5" height="6.6" fill="none" stroke="#cfd4d8" stroke-width="1"></rect><path d="M0 0.5H9.5M0 10.5H9.5M11.5 0V11" stroke="#cfd4d8" stroke-width="1"></path><path d="M10.6 4.5H12.4M10.6 6.5H12.4" stroke="#cfd4d8" stroke-width="0.8"></path></svg>
<svg style="left:266px;top:555px" width="16" height="15" viewBox="0 0 16 15"><path d="M5.2 3.5V2.4Q5.2 0.6 8 0.6Q10.8 0.6 10.8 2.4V3.5" fill="none" stroke="#fff" stroke-width="1"></path><rect x="0.3" y="3.5" width="15.4" height="11.2" fill="#fff"></rect><rect x="4.6" y="6" width="3" height="3" fill="#f25022"></rect><rect x="8.2" y="6" width="3" height="3" fill="#7fba00"></rect><rect x="4.6" y="9.6" width="3" height="3" fill="#00a4ef"></rect><rect x="8.2" y="9.6" width="3" height="3" fill="#ffb900"></rect></svg>
<svg style="left:298.5px;top:556px" width="17" height="13" viewBox="0 0 17 13"><path d="M0.2 5L8.5 0.3L16.8 5V12.7H0.2Z" fill="#fff"></path><path d="M0.5 5.2L8.2 9.6L16.5 4.8" fill="none" stroke="#1e3442" stroke-width="1.4"></path></svg>
<svg style="left:332.5px;top:556px" width="15" height="13" viewBox="0 0 15 13"><path d="M0 1Q0 0 1 0H5.5L7 1.6H14Q15 1.6 15 2.6V12Q15 13 14 13H1Q0 13 0 12Z" fill="#f4c443"></path><path d="M0 3.6H15" stroke="#fde08a" stroke-width="0.8"></path><rect x="3.5" y="6.5" width="8" height="6.5" fill="#3e9ee8"></rect><rect x="5.2" y="8.4" width="4.6" height="4.6" fill="#f4c443"></rect></svg>
<svg style="left:365.5px;top:554.4px" width="16" height="16" viewBox="0 0 16 16"><circle cx="8" cy="8" r="7.8" fill="#34a853"></circle><path d="M8 8L1.25 4.1A7.8 7.8 0 0 1 14.75 4.1Z" fill="#ea4335"></path><path d="M8 8L14.75 4.1A7.8 7.8 0 0 1 8 15.8Z" fill="#fbbc05"></path><circle cx="8" cy="8" r="3.6" fill="#fff"></circle><circle cx="8" cy="8" r="2.8" fill="#4285f4"></circle></svg>
<div class="a" style="left:360px;top:574px;width:27px;height:2px;background:#79b4e6"></div>
<div class="a" style="left:390.5px;top:549px;width:32.5px;height:27px;background:#495860"></div>
<svg style="left:398.5px;top:554px" width="16" height="16" viewBox="0 0 16 16"><defs><linearGradient id="eg" x1="0" y1="0" x2="1" y2="1"><stop offset="0" stop-color="#4cc6a4"></stop><stop offset="0.5" stop-color="#1a9ad8"></stop><stop offset="1" stop-color="#1050b0"></stop></linearGradient></defs><circle cx="8" cy="8" r="7.8" fill="url(#eg)"></circle><path d="M15.6 9.5Q15 5 10.5 4.8Q5.5 4.8 5.2 9Q5.4 12.8 10 12.6Q7.5 15 4.5 14.2Q0.6 12.6 0.6 8Q1 3 5 1.4" fill="#1560c0" opacity="0.9"></path><path d="M12.5 8.5Q12.2 6.5 9.8 6.6Q7.8 6.8 7.8 8.6Q8 10.4 10.8 10.4Q14.8 10.4 15.6 8.6" fill="#5ad08c"></path></svg>
<div class="a" style="left:391px;top:574px;width:31px;height:2px;background:#86c2ee"></div>
<svg style="left:431px;top:555px" width="16" height="15" viewBox="0 0 16 15"><rect x="4" y="0.5" width="11.5" height="14" rx="1" fill="#2b7cd3"></rect><rect x="4" y="5" width="11.5" height="5" fill="#185abd"></rect><rect x="4" y="10" width="11.5" height="4.5" fill="#103f91"></rect><rect x="0" y="3.3" width="8.6" height="8.6" rx="1" fill="#1a4fae"></rect><path d="M1.3 5L2.6 10L4.3 6.2L6 10L7.3 5" fill="none" stroke="#fff" stroke-width="0.9"></path></svg>
<div class="a" style="left:426px;top:574px;width:27px;height:2px;background:#79b4e6"></div>
<svg style="left:464px;top:556px" width="17" height="14" viewBox="0 0 17 14"><rect x="0" y="9" width="3" height="5" rx="1.3" fill="#4f5ee0"></rect><rect x="5" y="5.5" width="3.2" height="8.5" rx="1.4" fill="#4f5ee0"></rect><rect x="11" y="3.5" width="3.6" height="10.5" rx="1.5" fill="#4f5ee0"></rect><circle cx="12.8" cy="1.6" r="1.5" fill="#4f5ee0"></circle></svg>
<div class="a" style="left:459px;top:574px;width:27px;height:2px;background:#79b4e6"></div>
<svg style="left:498.5px;top:555px" width="17" height="16" viewBox="0 0 17 16"><circle cx="7.2" cy="7.2" r="7" fill="#2aa3e3"></circle><path d="M2.8 7.2L11 3.6L9.6 10.6L7.2 8.8L5.8 10Z" fill="#fff"></path><rect x="7.8" y="9.6" width="8.6" height="6" rx="2.4" fill="#8a8f94"></rect><text x="12.1" y="14.4" font-size="5.5" text-anchor="middle" fill="#e8e8e8" font-family="Liberation Sans" font-weight="bold">57</text></svg>
<div class="a" style="left:492px;top:574px;width:27px;height:2px;background:#79b4e6"></div>
<svg style="left:727px;top:554.5px" width="16" height="15" viewBox="0 0 16 15"><circle cx="7" cy="7" r="6.6" fill="#f5b83a"></circle><circle cx="7" cy="7" r="6.6" fill="none" stroke="#e8902a" stroke-width="0.6"></circle><path d="M5.5 13.2Q3.6 13.2 3.6 11.4Q3.8 9.6 5.8 9.8Q6.4 7.4 9 7.4Q11.6 7.6 12 10Q14.6 10 14.6 11.8Q14.4 13.4 12.4 13.4Z" fill="#d8e6f2"></path></svg>
<div class="t" style="left: 748px; top: 558.2px; font-size: 9.8px; color: rgb(255, 255, 255); font-weight: normal; font-style: normal; transform-origin: 0px 0px; transform: scaleX(0.922523);">85°F</div>
<div class="t" style="left: 772.6px; top: 558.2px; font-size: 9.8px; color: rgb(255, 255, 255); font-weight: normal; font-style: normal; transform-origin: 0px 0px; transform: scaleX(0.979503);">Mostly sunny</div>
<svg style="left:845px;top:559.5px" width="9" height="5" viewBox="0 0 9 5"><path d="M0.4 4.6L4.5 0.6L8.6 4.6" fill="none" stroke="#e0e0e0" stroke-width="1"></path></svg>
<svg style="left:860px;top:558.5px" width="12" height="8" viewBox="0 0 12 8"><rect x="3" y="1.2" width="8.4" height="6" fill="none" stroke="#e8e8e8" stroke-width="0.9"></rect><rect x="3.8" y="2" width="4.5" height="4.4" fill="#e8e8e8"></rect><path d="M0 2.5H2.6V6H0Z" fill="#e8e8e8"></path><path d="M1 0.5V2.5M2 0.5V2.5" stroke="#e8e8e8" stroke-width="0.6"></path></svg>
<svg style="left:877px;top:558px" width="10" height="9" viewBox="0 0 10 9"><path d="M0.5 8.5A8 8 0 0 1 8.5 0.5M2.5 8.5A6 6 0 0 1 8.5 2.5M4.5 8.5A4 4 0 0 1 8.5 4.5M6.5 8.5A2 2 0 0 1 8.5 6.5" fill="none" stroke="#c8ccd0" stroke-width="0.8"></path></svg>
<svg style="left:891.5px;top:557.5px" width="12" height="10" viewBox="0 0 12 10"><path d="M0.5 3.2H2.6L5.5 0.6V9.4L2.6 6.8H0.5Z" fill="none" stroke="#e8e8e8" stroke-width="0.9"></path><path d="M7.2 3.2Q8 5 7.2 6.8M8.8 2Q10.2 5 8.8 8M10.4 0.8Q12.4 5 10.4 9.2" fill="none" stroke="#c8ccd0" stroke-width="0.7"></path></svg>
<svg style="left:910px;top:556.5px" width="9" height="12" viewBox="0 0 9 12"><rect x="0.8" y="3.3" width="5.6" height="5.6" rx="1" fill="none" stroke="#e8e8e8" stroke-width="1"></rect><path d="M6.6 4.6L8.4 3.6V8.6L6.6 7.6" fill="none" stroke="#e8e8e8" stroke-width="0.8"></path><path d="M2 1.5Q3.6 0 5.2 1.5M2 10.5Q3.6 12 5.2 10.5" fill="none" stroke="#e8e8e8" stroke-width="0.8"></path></svg>
<div class="t" style="left:930px;top:552.5px;font-size:9px;color:#fff;transform:scale(1.001)">فا</div>
<div class="t" style="left: 929px; top: 564.38px; font-size: 9px; color: rgb(255, 255, 255); font-weight: normal; font-style: normal; transform-origin: 0px 0px; transform: scaleX(0.771631);">FA</div>
<div class="t" style="left: 949.4px; top: 553.38px; font-size: 9px; color: rgb(255, 255, 255); font-weight: normal; font-style: normal; transform-origin: 0px 0px; transform: scaleX(0.843273);">10:25</div>
<div class="t" style="left:969.5px;top:552.5px;font-size:9px;color:#fff;transform:scale(1.001)">ب.ظ</div>
<div class="t" style="left: 949.4px; top: 564.38px; font-size: 9px; color: rgb(255, 255, 255); font-weight: normal; font-style: normal; transform-origin: 0px 0px; transform: scaleX(0.799722);">۱۴۰۳/۰۳/۳۱</div>
<svg style="left:997px;top:556px" width="17" height="18" viewBox="0 0 17 18"><path d="M0.5 1H11.5V9.8H5.4L2.6 12.4V9.8H0.5Z" fill="#f8f8f8"></path><path d="M2 3.2H10M2 5.2H10M2 7.2H10" stroke="#8a9098" stroke-width="0.8"></path><circle cx="10.4" cy="11.8" r="5" fill="#1c2c3f" stroke="#d8d8d8" stroke-width="0.9"></circle><path d="M9.8 9.4L10.9 8.8V14.6" fill="none" stroke="#fff" stroke-width="1.1"></path></svg>
<div class="a" style="left:1020.5px;top:549px;width:1px;height:27px;background:#4a5868"></div>

</body></html>
